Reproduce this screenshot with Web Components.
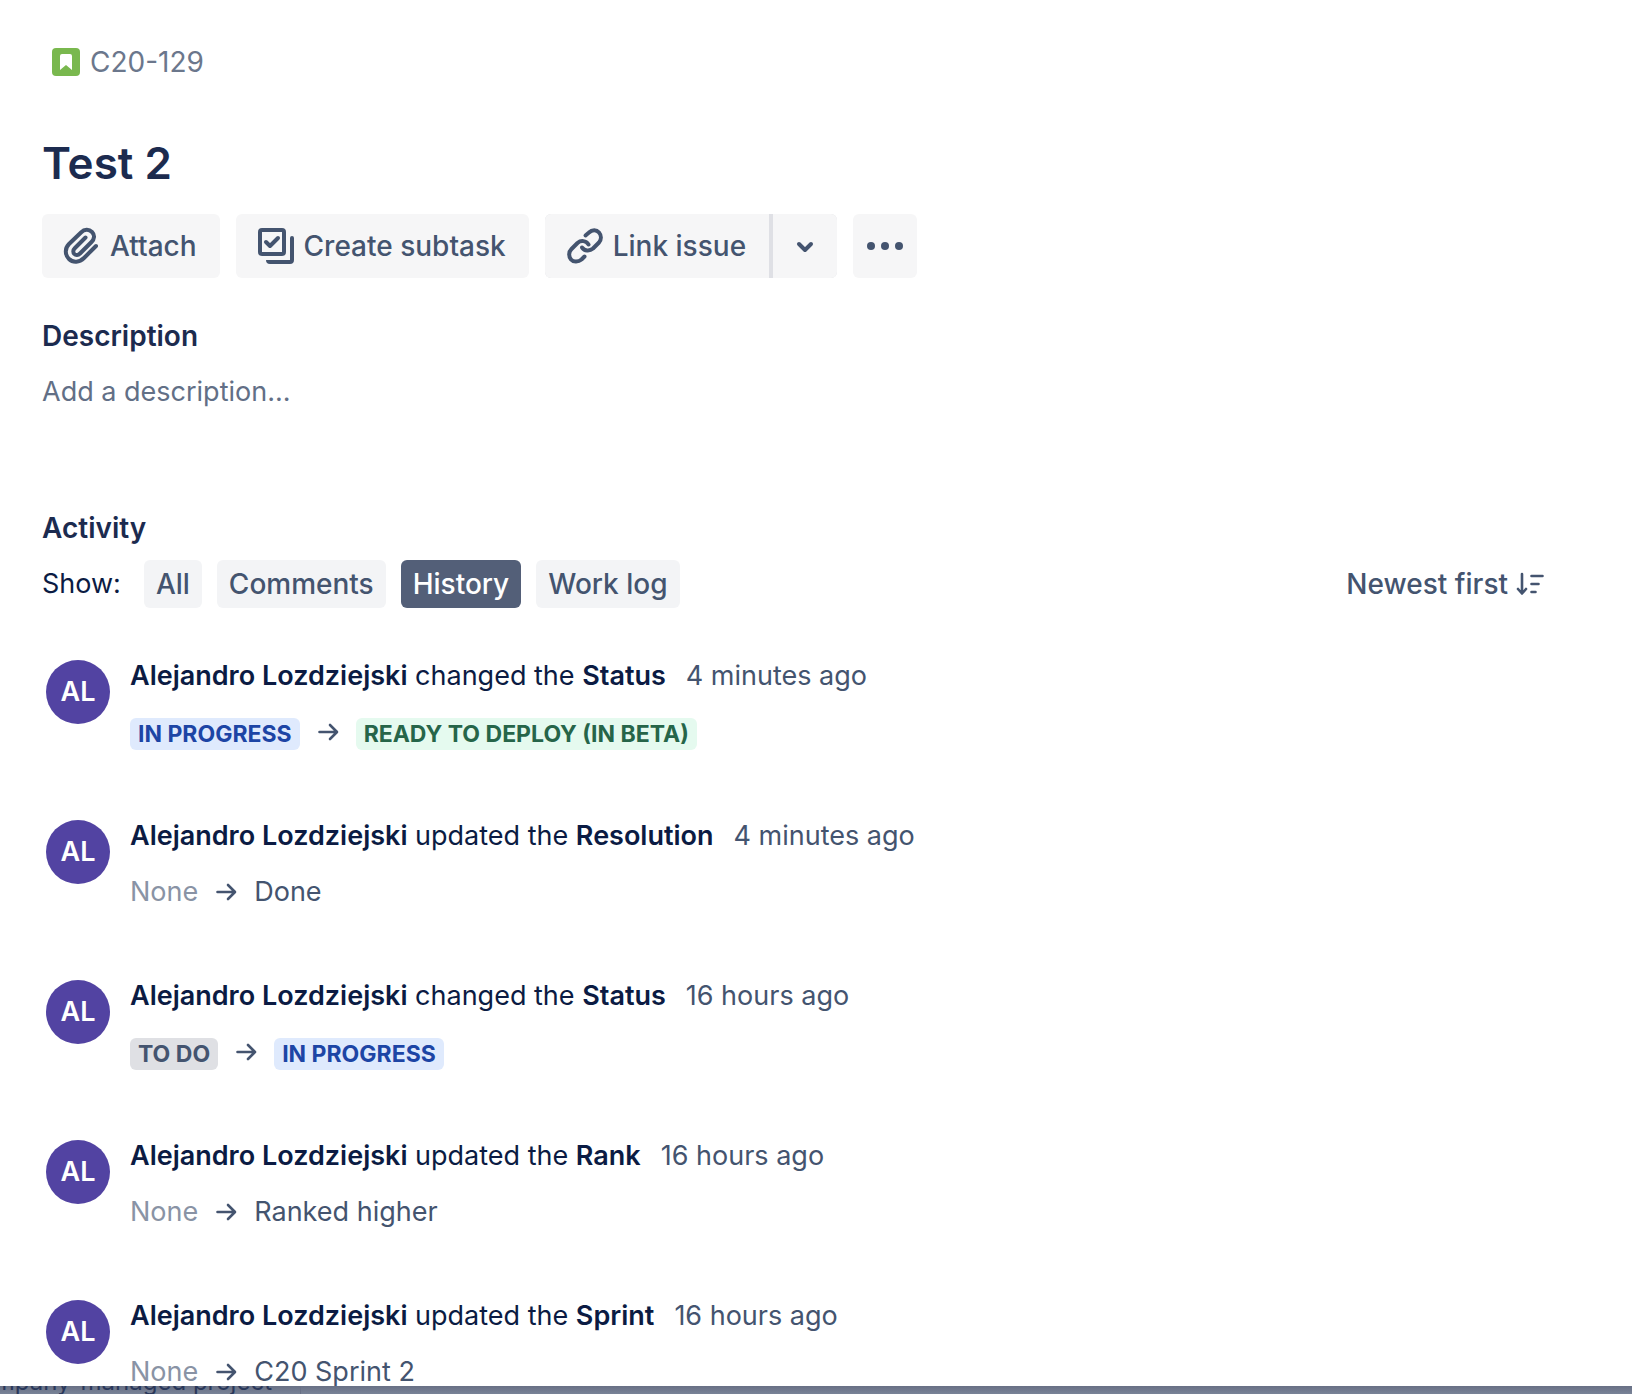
<!DOCTYPE html>
<html lang="en">
<head>
<meta charset="utf-8">
<meta name="viewport" content="width=device-width, initial-scale=1">
<title>C20-129 Test 2</title>
<style>
  html, body { margin: 0; height: 100%; }
  body {
    font: 400 28px/40px Inter, "Liberation Sans", sans-serif;
    color: #172b4d;
    background: #fff;
    --heading: #1c2b4f;
    --text: #0b1b43;
    --subtle: #44546f;
    --muted: #626f86;
    --neutral: #f6f6f7;
    --body-size: 27px;
  }
</style>
</head>
<body>
<issue-dialog>
  <issue-key slot="key">C20-129</issue-key>
  <span slot="title">Test 2</span>
  <issue-actions slot="actions"></issue-actions>
  <issue-section slot="description" heading="Description">
    <issue-placeholder>Add a description...</issue-placeholder>
  </issue-section>
  <issue-section slot="activity" heading="Activity" tight>
    <activity-filter></activity-filter>
    <activity-feed>
      <history-entry action="changed" field="Status" time="4 minutes ago">
        <status-lozenge slot="from" tone="blue">IN PROGRESS</status-lozenge>
        <status-lozenge slot="to" tone="green">READY TO DEPLOY (IN BETA)</status-lozenge>
      </history-entry>
      <history-entry action="updated" field="Resolution" time="4 minutes ago">
        <span slot="from">None</span><span slot="to">Done</span>
      </history-entry>
      <history-entry action="changed" field="Status" time="16 hours ago">
        <status-lozenge slot="from" tone="gray">TO DO</status-lozenge>
        <status-lozenge slot="to" tone="blue">IN PROGRESS</status-lozenge>
      </history-entry>
      <history-entry action="updated" field="Rank" time="16 hours ago">
        <span slot="from">None</span><span slot="to">Ranked higher</span>
      </history-entry>
      <history-entry action="updated" field="Sprint" time="16 hours ago">
        <span slot="from">None</span><span slot="to">C20 Sprint 2</span>
      </history-entry>
    </activity-feed>
  </issue-section>
  <page-backdrop slot="backdrop">mpany-managed project</page-backdrop>
</issue-dialog>

<script>
const define = (name, render) => customElements.define(name, class extends HTMLElement {
  connectedCallback() {
    if (this.shadowRoot) return;
    const template = document.createElement('template');
    template.innerHTML = render(this);
    this.attachShadow({ mode: 'open' }).append(template.content.cloneNode(true));
  }
});

const buttonReset = `button { font: inherit; color: inherit; border: 0; margin: 0; padding: 0; background: none; cursor: pointer; }`;

define('issue-dialog', () => `
  <style>
    :host { display: flex; flex-direction: column; height: 100vh; overflow: hidden; }
    main { flex: 1; min-height: 0; overflow: hidden; padding: 42px 42px 0; box-sizing: border-box; background: #fff; }
    h1 { margin: 53px 0 23px; font-size: 44px; line-height: 56px; font-weight: 600; color: var(--heading); }
    slot[name="description"] { display: block; margin-top: 38px; }
    slot[name="activity"] { display: block; margin-top: 96px; }
  </style>
  <main>
    <slot name="key"></slot>
    <h1><slot name="title"></slot></h1>
    <slot name="actions"></slot>
    <slot name="description"></slot>
    <slot name="activity"></slot>
  </main>
  <slot name="backdrop"></slot>`);

define('issue-key', () => `
  <style>
    :host { display: flex; padding-left: 10px; }
    a { display: flex; align-items: center; gap: 10px; color: #6b778c; text-decoration: none; }
    svg { display: block; }
  </style>
  <a href="#">
    <svg width="28" height="28" viewBox="0 0 28 28" aria-hidden="true"><rect width="28" height="28" rx="4" fill="#79b84e"/><path d="M10 6h8a2 2 0 0 1 2 2v14l-6-5-6 5V8a2 2 0 0 1 2-2z" fill="#fff"/></svg>
    <slot></slot>
  </a>`);

define('issue-actions', () => `
  <style>
    ${buttonReset}
    :host { display: flex; gap: 16px; color: var(--subtle); font-weight: 500; }
    button { display: flex; align-items: center; gap: 5px; height: 64px; background: var(--neutral); border-radius: 6px; }
    .labelled { padding: 0 23px 0 15px; }
    .square { width: 64px; justify-content: center; }
    .split { display: flex; gap: 4px; background: #dfe0e5; border-radius: 6px; }
    .split .labelled { border-radius: 6px 0 0 6px; }
    .split .square { border-radius: 0 6px 6px 0; }
    svg { display: block; flex: none; fill: none; stroke: currentColor; stroke-width: 4; stroke-linecap: round; stroke-linejoin: round; }
  </style>
  <button class="labelled" type="button">
    <svg width="48" height="48" viewBox="0 0 48 48" aria-hidden="true"><path d="M39 24 27 36C22.500 40.500 16 41 12 37S7.500 26.500 12 22L24 10.500C27.500 7 32 7 35 10S37.500 17 34.500 20L23 31.500C21 33.500 18.800 33.600 17.300 32S16 28 18 26L28.500 15.500"/></svg>
    Attach
  </button>
  <button class="labelled" type="button">
    <svg width="48" height="48" viewBox="0 0 48 48" aria-hidden="true"><rect x="9" y="8" width="24" height="24" rx="2"/><path d="m15 20 4 4 8-8"/><path d="M39 16a2 2 0 0 1 4 0v22a4 4 0 0 1-4 4H19a4 4 0 0 1-4-4h24z" fill="currentColor" stroke="none"/></svg>
    Create subtask
  </button>
  <div class="split">
    <button class="labelled" type="button">
      <svg width="48" height="48" viewBox="0 0 48 48" aria-hidden="true"><path d="M25.500 13.500 29 10.500C32 7.500 36.500 7.500 39 10.500S41.500 17.500 39 20.500L33 26.500C29.500 29.500 24.500 29 22 25.500"/><path d="M28.500 22.500C26 18.500 21 18 17.500 21L11.500 27C8.500 30 8.500 34.500 11 37.500S18.500 40 21.500 37.500L24.500 34.500"/></svg>
      Link issue
    </button>
    <button class="square" type="button" aria-label="More link options">
      <svg width="48" height="48" viewBox="0 0 48 48" aria-hidden="true"><path d="m18 22 6 6 6-6"/></svg>
    </button>
  </div>
  <button class="square" type="button" aria-label="More actions">
    <svg width="48" height="48" viewBox="0 0 48 48" aria-hidden="true"><g fill="currentColor" stroke="none"><circle cx="10" cy="24" r="4"/><circle cx="24" cy="24" r="4"/><circle cx="38" cy="24" r="4"/></g></svg>
  </button>`);

define('issue-section', el => `
  <style>
    :host { display: block; }
    h2 { margin: 0 0 ${el.hasAttribute('tight') ? 12 : 16}px; font: inherit; font-weight: 600; color: var(--heading); }
  </style>
  <h2>${el.getAttribute('heading')}</h2>
  <slot></slot>`);

define('issue-placeholder', () => `
  <style>${buttonReset} :host { display: block; font-size: var(--body-size); color: var(--muted); } button { display: block; }</style>
  <button type="button"><slot></slot></button>`);

define('activity-filter', () => `
  <style>
    ${buttonReset}
    :host { display: flex; align-items: center; justify-content: space-between; padding-right: 42px; color: var(--subtle); font-weight: 500; }
    .filters { display: flex; align-items: center; gap: 15px; }
    .label { font-size: var(--body-size); font-weight: 400; color: var(--text); margin-right: 8px; }
    .filters button { height: 48px; padding: 0 12px; border-radius: 6px; background: #f3f4f6; }
    .filters button[aria-pressed="true"] { background: #535f78; color: #fff; }
    .sort { display: flex; align-items: center; gap: 4px; }
    svg { display: block; fill: none; stroke: currentColor; stroke-width: 3; stroke-linecap: round; stroke-linejoin: round; }
  </style>
  <div class="filters" role="group" aria-labelledby="show">
    <span class="label" id="show">Show:</span>
    <button type="button" aria-pressed="false">All</button>
    <button type="button" aria-pressed="false">Comments</button>
    <button type="button" aria-pressed="true">History</button>
    <button type="button" aria-pressed="false">Work log</button>
  </div>
  <button class="sort" type="button">Newest first
    <svg width="36" height="32" viewBox="0 0 36 32" aria-hidden="true"><path stroke-width="2.600" d="M10 6v19M6 21l4 4.500 4-4.500M19.500 8h11M19.500 16h7M19.500 24h4"/></svg>
  </button>`);

define('activity-feed', () => `
  <style>:host { display: flex; flex-direction: column; gap: 64px; margin-top: 48px; }</style>
  <slot></slot>`);

define('user-avatar', () => `
  <style>:host { display: flex; align-items: center; justify-content: center; flex: none; width: 64px; height: 64px; border-radius: 50%; background: #5243a2; color: #fff; font-size: var(--body-size); font-weight: 600; }</style>
  <slot></slot>`);

define('history-entry', el => `
  <style>
    :host { display: flex; gap: 20px; padding-left: 4px; color: var(--text); font-size: var(--body-size); }
    user-avatar { margin-top: 4px; }
    .body { display: flex; flex-direction: column; gap: 16px; }
    b { font-weight: 600; }
    time { margin-left: 20px; color: var(--subtle); }
    .change { display: flex; align-items: center; gap: 16px; height: 40px; color: var(--subtle); }
    slot[name="from"] { color: #8993a5; }
    svg { display: block; flex: none; fill: none; stroke: var(--subtle); stroke-width: 2.600; stroke-linecap: round; stroke-linejoin: round; }
  </style>
  <user-avatar>AL</user-avatar>
  <div class="body">
    <div><b>Alejandro Lozdziejski</b> ${el.getAttribute('action')} the <b>${el.getAttribute('field')}</b><time>${el.getAttribute('time')}</time></div>
    <div class="change">
      <slot name="from"></slot>
      <svg width="24" height="24" viewBox="0 0 24 24" role="img" aria-label="to"><path d="M3.500 12h17M14 5l7 7-7 7"/></svg>
      <slot name="to"></slot>
    </div>
  </div>`);

const tones = { blue: ['#dfeafd', '#1d45a5'], green: ['#e5faef', '#266549'], gray: ['#dfe0e4', '#44546f'] };
define('status-lozenge', el => {
  const [background, color] = tones[el.getAttribute('tone')];
  return `
  <style>:host { display: block; margin-top: 4px; padding: 0 8px; border-radius: 6px; font-size: 23px; line-height: 32px; font-weight: 700; background: ${background}; color: ${color}; }</style>
  <slot></slot>`;
});

define('page-backdrop', () => `
  <style>
    :host { display: flex; align-items: flex-end; flex: none; height: 8px; overflow: hidden; background: linear-gradient(#687085, #798397); color: #2a385a; font-size: 24px; line-height: 24px; }
    aside { display: flex; justify-content: flex-end; width: 272px; padding-right: 28px; border-right: 1px solid #687086; white-space: nowrap; }
  </style>
  <aside><slot></slot></aside>`);
</script>
</body>
</html>
